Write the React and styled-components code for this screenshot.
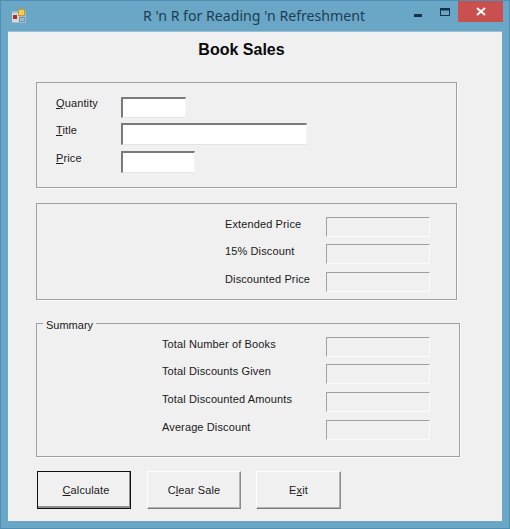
import React from "react";
import styled, { createGlobalStyle } from "styled-components";

const Global = createGlobalStyle`
  html, body { margin: 0; padding: 0; background: #6aa7c7; }
  * { box-sizing: border-box; }
`;

const Window = styled.div`
  width: 510px;
  height: 529px;
  background: #6aa7c7;
  border: 1px solid #4f8fb3;
  display: flex;
  flex-direction: column;
  padding: 0 7px 7px;
  font-family: "Liberation Sans", Arial, sans-serif;
  position: relative;
`;

const TitleBar = styled.div`
  height: 30px;
  flex: none;
  display: flex;
  align-items: flex-start;
`;

const AppIcon = styled.svg`
  width: 16px;
  height: 16px;
  margin: 7px 0 0 3px;
  flex: none;
`;

const TitleText = styled.div`
  position: absolute;
  left: 142px;
  top: 5px;
  font: 14.15px/20px "Noto Sans", "Open Sans", sans-serif;
  color: #1d3d52;
  white-space: nowrap;
`;

const Controls = styled.div`
  margin-left: auto;
  margin-right: -1px;
  display: flex;
  align-items: flex-start;
`;

const CtrlIcon = styled.svg`
  display: block;
  flex: none;
  margin-top: ${(p) => p.$top}px;
  margin-left: ${(p) => p.$left || 0}px;
`;

const Close = styled.div`
  width: 45px;
  height: 21px;
  margin-left: 8px;
  background: #c9504f;
  display: flex;
  align-items: center;
  justify-content: center;
`;

const Client = styled.div`
  flex: 1;
  background: #f0f0f0;
  border: 1px solid #9dbed2;
  border-width: 1px 0 0 0;
  display: flex;
  flex-direction: column;
  padding: 8px 0 0 28px;
  min-height: 0;
`;

const Heading = styled.h1`
  margin: 0 0 22px 0;
  width: 411px;
  text-align: center;
  font: bold 16px/20px "Liberation Sans", Arial, sans-serif;
  color: #0a0a0a;
`;

const Panel = styled.div`
  width: ${(p) => p.$w}px;
  height: ${(p) => p.$h}px;
  margin-bottom: ${(p) => p.$mb}px;
  border: 1px solid #a0a0a0;
  box-shadow: 1px 1px 0 #fbfbfb;
  position: relative;
  padding: ${(p) => p.$pad};
  flex: none;
`;

const Legend = styled.span`
  position: absolute;
  left: 6px;
  top: -5px;
  padding: 0 3px 0 3px;
  background: #f0f0f0;
  font-size: 11px;
  line-height: 13px;
  color: #1a1a1a;
`;

const EntryGrid = styled.div`
  display: grid;
  grid-template-columns: 65px auto;
  justify-content: start;
  justify-items: start;
  grid-template-rows: 21px 23px 22px;
  row-gap: 5px;
`;

const Label = styled.label`
  font-size: 11px;
  line-height: 13px;
  color: #1a1a1a;
  white-space: nowrap;
  letter-spacing: 0.12px;
  display: block;
  margin-top: ${(p) => p.$mt || 0}px;
  u { text-decoration-thickness: 1px; text-underline-offset: 1px; }
`;

const Input = styled.input`
  display: block;
  width: ${(p) => p.$w}px;
  height: ${(p) => p.$h}px;
  padding: 0;
  background: #fff;
  border: 1px solid;
  border-width: 2px 1px 1px 2px;
  border-color: #7a7a7a #f4f4f4 #e4e4e4 #7a7a7a;
  outline: none;
`;

const OutputGrid = styled.div`
  display: grid;
  grid-template-columns: ${(p) => p.$labelW}px 104px;
  grid-template-rows: ${(p) => p.$rows};
  row-gap: 7px;
  align-items: start;
`;

const OutLabel = styled.div`
  font-size: 11px;
  line-height: 13px;
  color: #1a1a1a;
  white-space: nowrap;
  letter-spacing: 0.12px;
  margin-top: 1px;
`;

const Output = styled.div`
  width: 104px;
  height: 20px;
  background: #f0f0f0;
  border: 1px solid;
  border-color: #a0a0a0 #fbfbfb #fbfbfb #a0a0a0;
`;

const Buttons = styled.div`
  display: flex;
  margin-top: 14px;
  margin-left: 1px;
`;

const Button = styled.button`
  width: ${(p) => p.$w}px;
  height: 38px;
  margin-right: ${(p) => p.$mr || 0}px;
  padding: 0 0 0 ${(p) => (p.$def ? 4 : 0)}px;
  background: #f0f0f0;
  font: 11px/13px "Liberation Sans", Arial, sans-serif;
  letter-spacing: 0.12px;
  color: #1a1a1a;
  border: 1px solid;
  border-color: ${(p) => (p.$def ? "#111" : "#fdfdfd #8a8a8a #7c7c7c #fdfdfd")};
  box-shadow: ${(p) => (p.$def ? "inset -1px -2px 0 #8f8f8f" : "inset -1px -1px 0 #b4b4b4")};
  u { text-decoration-thickness: 1px; text-underline-offset: 1px; }
`;

export default function App() {
  return (
    <>
      <Global />
      <Window>
        <TitleBar>
          <AppIcon viewBox="0 0 16 16">
            <rect x="1" y="3" width="14" height="12" fill="#c9d3dc" opacity="0.55" />
            <rect x="1" y="5" width="7" height="9" fill="#d8d8d8" />
            <rect x="2" y="7" width="4" height="4" fill="#a83232" />
            <rect x="7.5" y="1.5" width="6" height="6" fill="#f0cf58" stroke="#c39a2c" />
            <rect x="8.5" y="9.5" width="5" height="4" fill="#9fb8d0" stroke="#7b92a8" />
          </AppIcon>
          <TitleText>R 'n R for Reading 'n Refreshment</TitleText>
          <Controls>
            <CtrlIcon $top={12} width="8" height="5" viewBox="0 0 8 5">
              <rect x="0" y="1" width="8" height="3" fill="#14324a" />
            </CtrlIcon>
            <CtrlIcon $top={7} $left={18} width="10" height="8" viewBox="0 0 10 8">
              <rect x="0.5" y="0.5" width="9" height="7" fill="none" stroke="#14324a" />
              <rect x="0.5" y="0.5" width="9" height="2" fill="#14324a" />
            </CtrlIcon>
            <Close>
              <CtrlIcon $top={0} width="10" height="9" viewBox="0 0 10 9">
                <path d="M1 1 L9 8 M9 1 L1 8" stroke="#fff" strokeWidth="2" />
              </CtrlIcon>
            </Close>
          </Controls>
        </TitleBar>
        <Client>
          <Heading>Book Sales</Heading>
          <Panel $w={421} $h={106} $mb={15} $pad="14px 0 0 19px">
            <EntryGrid>
              <Label><u>Q</u>uantity</Label>
              <Input $w={65} $h={21} />
              <Label $mt={1}><u>T</u>itle</Label>
              <Input $w={186} $h={22} />
              <Label $mt={1}><u>P</u>rice</Label>
              <Input $w={74} $h={22} />
            </EntryGrid>
          </Panel>
          <Panel $w={421} $h={97} $mb={23} $pad="13px 0 0 188px">
            <OutputGrid $labelW={101} $rows="20px 21px 20px">
              <OutLabel>Extended Price</OutLabel>
              <Output />
              <OutLabel>15% Discount</OutLabel>
              <Output />
              <OutLabel>Discounted Price</OutLabel>
              <Output />
            </OutputGrid>
          </Panel>
          <Panel $w={424} $h={134} $mb={0} $pad="13px 0 0 125px">
            <Legend>Summary</Legend>
            <OutputGrid $labelW={164} $rows="20px 21px 21px 20px">
              <OutLabel>Total Number of Books</OutLabel>
              <Output />
              <OutLabel>Total Discounts Given</OutLabel>
              <Output />
              <OutLabel>Total Discounted Amounts</OutLabel>
              <Output />
              <OutLabel>Average Discount</OutLabel>
              <Output />
            </OutputGrid>
          </Panel>
          <Buttons>
            <Button $w={94} $mr={16} $def><u>C</u>alculate</Button>
            <Button $w={94} $mr={15}>C<u>l</u>ear Sale</Button>
            <Button $w={85}>E<u>x</u>it</Button>
          </Buttons>
        </Client>
      </Window>
    </>
  );
}
